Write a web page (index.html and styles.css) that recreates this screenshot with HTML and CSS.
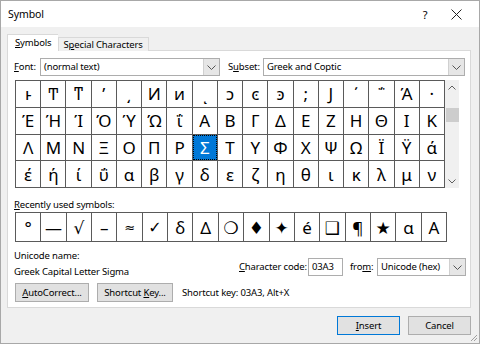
FILE: index.html
```html
<!DOCTYPE html>
<html>
<head>
<meta charset="utf-8">
<link rel="stylesheet" href="styles.css">
</head>
<body>
<div class="window">
  <div class="titlebar">
    <span class="title">Symbol</span>
    <span class="help">?</span>
    <span class="close"><svg width="11" height="11" viewBox="0 0 11 11"><path d="M0.5 0.5 L10.5 10.5 M10.5 0.5 L0.5 10.5" stroke="#222" stroke-width="1" fill="none"/></svg></span>
  </div>
  <div class="content">
    <div class="tabs">
      <div class="tab active"><span><u>S</u>ymbols</span></div>
      <div class="tab"><span>S<u>p</u>ecial Characters</span></div>
    </div>
    <div class="panel">
      <div class="font-row">
        <span class="lbl font-lbl"><u>F</u>ont:</span>
        <div class="combo font-combo"><span class="combo-text">(normal text)</span><span class="combo-btn"><svg width="9" height="5" viewBox="0 0 9 5"><path d="M0.5 0.5 L4.5 4.5 L8.5 0.5" stroke="#555" fill="none"/></svg></span></div>
        <span class="lbl subset-lbl">S<u>u</u>bset:</span>
        <div class="combo subset-combo"><span class="combo-text">Greek and Coptic</span><span class="combo-btn"><svg width="9" height="5" viewBox="0 0 9 5"><path d="M0.5 0.5 L4.5 4.5 L8.5 0.5" stroke="#555" fill="none"/></svg></span></div>
      </div>
      <div class="grid-wrap">
        <div class="grid">
          <div class="cell">ͱ</div><div class="cell">Ͳ</div><div class="cell">ͳ</div><div class="cell">ʹ</div><div class="cell">͵</div><div class="cell">Ͷ</div><div class="cell">ͷ</div><div class="cell">ͺ</div><div class="cell">ͻ</div><div class="cell">ͼ</div><div class="cell">ͽ</div><div class="cell">;</div><div class="cell">Ϳ</div><div class="cell">΄</div><div class="cell">΅</div><div class="cell">Ά</div><div class="cell">·</div>
          <div class="cell">Έ</div><div class="cell">Ή</div><div class="cell">Ί</div><div class="cell">Ό</div><div class="cell">Ύ</div><div class="cell">Ώ</div><div class="cell">ΐ</div><div class="cell">Α</div><div class="cell">Β</div><div class="cell">Γ</div><div class="cell">Δ</div><div class="cell">Ε</div><div class="cell">Ζ</div><div class="cell">Η</div><div class="cell">Θ</div><div class="cell">Ι</div><div class="cell">Κ</div>
          <div class="cell">Λ</div><div class="cell">Μ</div><div class="cell">Ν</div><div class="cell">Ξ</div><div class="cell">Ο</div><div class="cell">Π</div><div class="cell">Ρ</div><div class="cell selected">Σ</div><div class="cell">Τ</div><div class="cell">Υ</div><div class="cell">Φ</div><div class="cell">Χ</div><div class="cell">Ψ</div><div class="cell">Ω</div><div class="cell">Ϊ</div><div class="cell">Ϋ</div><div class="cell">ά</div>
          <div class="cell">έ</div><div class="cell">ή</div><div class="cell">ί</div><div class="cell">ΰ</div><div class="cell">α</div><div class="cell">β</div><div class="cell">γ</div><div class="cell">δ</div><div class="cell">ε</div><div class="cell">ζ</div><div class="cell">η</div><div class="cell">θ</div><div class="cell">ι</div><div class="cell">κ</div><div class="cell">λ</div><div class="cell">μ</div><div class="cell">ν</div>
        </div>
        <div class="scrollbar">
          <span class="sb-arrow"><svg width="8" height="5" viewBox="0 0 8 5"><path d="M0.5 4.5 L4 1 L7.5 4.5" stroke="#606060" fill="none"/></svg></span>
          <span class="sb-thumb"></span>
          <span class="sb-space"></span>
          <span class="sb-arrow"><svg width="8" height="5" viewBox="0 0 8 5"><path d="M0.5 0.5 L4 4 L7.5 0.5" stroke="#606060" fill="none"/></svg></span>
        </div>
      </div>
      <div class="lbl recent-lbl"><u>R</u>ecently used symbols:</div>
      <div class="recent">
        <div class="rcell">°</div><div class="rcell">—</div><div class="rcell">√</div><div class="rcell">–</div><div class="rcell small">≈</div><div class="rcell check">✓</div><div class="rcell">δ</div><div class="rcell">Δ</div><div class="rcell">❍</div><div class="rcell">♦</div><div class="rcell">✦</div><div class="rcell">é</div><div class="rcell">❑</div><div class="rcell">¶</div><div class="rcell">★</div><div class="rcell">α</div><div class="rcell">Α</div>
      </div>
      <div class="info">
        <div class="info-left">
          <div class="lbl">Unicode name:</div>
          <div class="lbl">Greek Capital Letter Sigma</div>
        </div>
        <div class="info-right">
          <span class="lbl code-lbl"><u>C</u>haracter code:</span>
          <div class="input">03A3</div>
          <span class="lbl from-lbl">fro<u>m</u>:</span>
          <div class="combo from-combo"><span class="combo-text">Unicode (hex)</span><span class="combo-btn"><svg width="9" height="5" viewBox="0 0 9 5"><path d="M0.5 0.5 L4.5 4.5 L8.5 0.5" stroke="#555" fill="none"/></svg></span></div>
        </div>
      </div>
      <div class="btn-row">
        <div class="btn autocorrect"><span><u>A</u>utoCorrect...</span></div>
        <div class="btn shortcut"><span>Shortcut <u>K</u>ey...</span></div>
        <span class="lbl shortcut-text">Shortcut key: 03A3, Alt+X</span>
      </div>
    </div>
    <div class="footer">
      <div class="btn big default"><span><u>I</u>nsert</span></div>
      <div class="btn big"><span>Cancel</span></div>
    </div>
  </div>
  <svg class="grip" width="10" height="10" viewBox="0 0 10 10"><path d="M9 3 L3 9 M9 6 L6 9" stroke="#a0a0a0" stroke-width="1" fill="none"/></svg>
</div>
</body>
</html>
```

FILE: styles.css
```css
* { box-sizing: border-box; }
html, body { margin: 0; padding: 0; }
body {
  font-family: "Noto Sans", "DejaVu Sans", sans-serif;
  font-size: 9.5px;
  letter-spacing: -0.15px;
  color: #000;
  background: #fff;
}
u { text-decoration: underline; text-underline-offset: 1px; }

.window {
  position: relative;
  width: 480px;
  height: 344px;
  border: 1px solid #a8a8a8;
  background: #f0f0f0;
  display: flex;
  flex-direction: column;
}

.titlebar {
  height: 26px;
  background: #fff;
  display: flex;
  align-items: center;
  padding-left: 7px;
  flex: none;
}
.title { font-size: 10.5px; flex: 1; letter-spacing: -0.1px; }
.help { font-size: 11px; width: 20px; text-align: center; margin-right: 16px; }
.close { width: 11px; height: 11px; margin-right: 17px; display: flex; }

.content {
  flex: 1;
  display: flex;
  flex-direction: column;
  padding: 7px 8px 0 6px;
}

.tabs { display: flex; align-items: flex-end; height: 17px; position: relative; z-index: 1; }
.tab {
  height: 14px;
  padding: 0 5px;
  border: 1px solid #d9d9d9;
  border-bottom: none;
  background: #f0f0f0;
  line-height: 13px;
  white-space: nowrap;
}
.tab.active {
  height: 17px;
  background: #fff;
  line-height: 16px;
  padding: 0 6px 0 7px;
  border-right: none;
}

.panel {
  height: 258px;
  background: #fff;
  border: 1px solid #d9d9d9;
  margin-top: -1px;
  padding: 7px 0 0 7px;
  display: flex;
  flex-direction: column;
}

.font-row { display: flex; align-items: center; height: 18px; }
.lbl { white-space: nowrap; line-height: 14px; }
.font-lbl { width: 26px; margin-left: -1px; }
.subset-lbl { width: 35px; margin-left: 8px; }
.combo {
  height: 18px;
  border: 1px solid #adadad;
  background: #fff;
  display: flex;
  align-items: center;
}
.combo-text { flex: 1; padding-left: 3px; line-height: 14px; white-space: nowrap; overflow: hidden; }
.combo-btn {
  width: 16px;
  height: 16px;
  background: #e6e6e6;
  border-left: 1px solid #d0d0d0;
  display: flex;
  align-items: center;
  justify-content: center;
}
.font-combo { width: 180px; }
.subset-combo { width: 202px; }

.grid-wrap { display: flex; margin-top: 4px; height: 108px; }
.grid {
  width: 430px;
  height: 108px;
  display: grid;
  grid-template-columns: repeat(17, 1fr);
  grid-template-rows: repeat(4, 1fr);
  gap: 1px;
  padding: 1px;
  background: #5a5a5a;
}
.cell {
  background: #fff;
  display: flex;
  align-items: center;
  justify-content: center;
  font-size: 17px;
  line-height: 1;
  letter-spacing: 0;
}
.cell.selected {
  background: #0078d7;
  color: #fff;
  outline: 1px dotted #000;
  outline-offset: -1px;
}
.scrollbar {
  width: 14px;
  background: #f0f0f0;
  display: flex;
  flex-direction: column;
  align-items: center;
}
.sb-arrow { height: 14px; width: 14px; display: flex; align-items: center; justify-content: center; }
.sb-thumb { width: 13px; height: 14px; background: #cdcdcd; margin-top: 14px; }
.sb-space { flex: 1; }

.recent-lbl { margin-top: 10px; margin-left: -1px; }
.recent {
  width: 432px;
  height: 30px;
  display: grid;
  grid-template-columns: repeat(17, 1fr);
  gap: 1px;
  padding: 1px;
  background: #5a5a5a;
}
.rcell {
  background: #fff;
  display: flex;
  align-items: center;
  justify-content: center;
  font-size: 17px;
  line-height: 1;
  letter-spacing: 0;
}
.rcell.small { font-size: 13px; }
.rcell.check { font-size: 16px; font-weight: 700; }

.info { display: flex; margin-top: 7px; }
.info-left { width: 225px; margin-left: -1px; display: flex; flex-direction: column; gap: 2px; }
.info-right { display: flex; align-items: center; height: 18px; margin-top: 9px; }
.code-lbl { width: 66px; }
.input {
  width: 35px;
  height: 18px;
  border: 1px solid #adadad;
  margin-left: 3px;
  padding-left: 3px;
  line-height: 16px;
}
.from-lbl { margin-left: 7px; width: 27px; }
.from-combo { width: 89px; }

.btn-row { display: flex; align-items: center; margin-top: 4px; height: 19px; }
.btn {
  height: 19px;
  border: 1px solid #adadad;
  background: #e1e1e1;
  display: flex;
  align-items: center;
  justify-content: center;
  white-space: nowrap;
}
.autocorrect { width: 74px; }
.shortcut { width: 76px; margin-left: 8px; }
.shortcut-text { margin-left: 9px; }

.footer { display: flex; justify-content: flex-end; gap: 8px; margin-top: 8px; }
.btn.big { width: 63px; height: 19px; }
.btn.default { border-color: #0078d7; }

.grip { position: absolute; right: 1px; bottom: 1px; }
```
